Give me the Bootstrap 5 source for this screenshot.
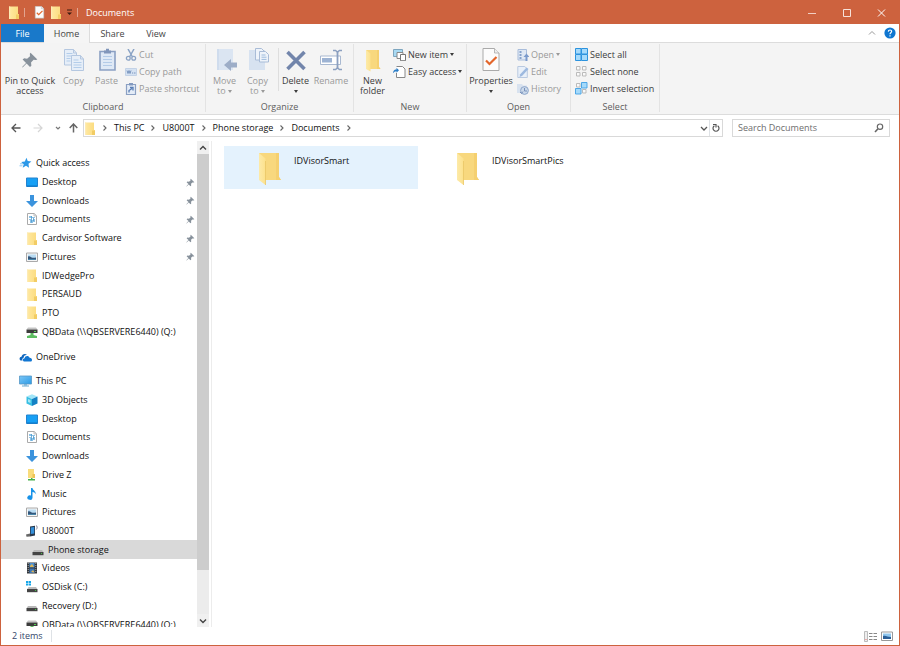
<!DOCTYPE html>
<html lang="en">
<head>
<meta charset="utf-8">
<meta name="viewport" content="width=device-width, initial-scale=1">
<title>Documents</title>
<link href="https://cdn.jsdelivr.net/npm/bootstrap@5.3.0/dist/css/bootstrap.min.css" rel="stylesheet">
<style>
  :root { --accent: #cd623e; --line: #dcdcdc; }
  body { font-family: "Open Sans", "Noto Sans", sans-serif; font-size: 9px; line-height: 12px; color: #111; }
  svg { display: block; flex: none; }
  button { background: none; border: 0; padding: 0; color: inherit; font: inherit; }
  a { color: inherit; text-decoration: none; }
  .window { border: 1px solid var(--accent); }
  .titlebar { background: var(--accent); color: #fff; height: 23px; padding: 0 13px 0 7px; }
  .titlebar h1 { font-size: 9px; line-height: 12px; font-weight: 400; }
  .vsep { width: 1px; height: 9px; background: #e2a48f; }
  .win-buttons { gap: 25px; }
  .tabs { height: 19px; padding-right: 3px; border-bottom: 1px solid var(--line); }
  .tabs .tab { text-align: center; line-height: 19px; height: 18px; color: #444; }
  .tabs .tab-file { width: 43px; background: #1979ca; color: #fff; }
  .tabs .tab-home { width: 46px; background: #f5f5f5; border-right: 1px solid var(--line); height: 19px; }
  .tab-share { width: 45px; }
  .tab-view { width: 42px; }
  .ribbon { background: #f4f4f4; border-bottom: 1px solid var(--line); padding: 1px 0 2px; color: #3c3c3c; }
  .group { border-right: 1px solid #e3e3e3; height: 68px; padding-top: 2px; }
  .group-label { line-height: 10px; color: #5c5c5c; }
  .g-clip { width: 205px; } .g-org { width: 148px; } .g-new { width: 113px; } .g-open { width: 104px; } .g-sel { width: 89px; }
  .tools { padding-left: 2px; }
  .big { width: 33px; line-height: 10px; padding-top: 2px; white-space: nowrap; }
  .big svg { margin: 0 auto 4px; }
  .big-pin { width: 54px; } .big-props { width: 48px; } .big-rename { width: 38px; }
  .small-btn { display: flex; align-items: center; gap: 2px; height: 17px; white-space: nowrap; }
  .ribbon button:disabled { color: #999; }
  .rsep { width: 1px; height: 43px; margin-top: 2px; background: #dedede; }
  .caret { display: inline-block; width: 0; height: 0; border: 2px solid transparent; border-top: 3px solid currentColor; border-bottom: 0; vertical-align: middle; }
  .address { padding: 4px 9px 4px 10px; }
  .nav-buttons { margin-right: 5px; }
  .box { height: 18px; border: 1px solid #d9d9d9; }
  .crumbs { gap: 6px; }
  .refresh { padding: 0 2px; }
  .search { width: 158px; padding: 0 5px; margin-left: 9px; }
  .search input { border: 0; outline: 0; width: 100%; min-width: 0; padding: 0; font: inherit; }
  .search input::placeholder { color: #6d6d6d; opacity: 1; }
  .panes { min-height: 0; }
  .tree { width: 196px; padding-top: 13px; }
  .tree ul { display: grid; grid-auto-rows: 1fr; margin: 0 0 6px; }
  .tree-ten { height: 187px; } .tree-one { height: 19px; } .tree-pc { height: 262px; }
  .tree a { display: flex; align-items: center; height: 100%; gap: 4px; padding: 0 2px 0 25px; white-space: nowrap; }
  .tree .root { padding-left: 18px; }
  .tree .sub { padding-left: 31px; }
  .tree .current { background: #d9d9d9; }
  .scroll { width: 12px; background: #ececec; }
  .scroll button { height: 13px; background: #f0f0f0; }
  .thumb { flex: 417; background: #cdcdcd; }
  .rest { flex: 44; }
  .files { border-left: 1px solid #ececec; margin-left: 2px; padding: 5px 12px; gap: 4px; }
  .file { width: 194px; height: 43px; padding: 6px 0 0 33px; gap: 11px; }
  .file span { padding-top: 3px; }
  .picked { background: #e4f2fd; }
  .status { height: 18px; padding: 0 6px 0 11px; color: #33476b; }
</style>
<script src="https://cdn.jsdelivr.net/npm/bootstrap@5.3.0/dist/js/bootstrap.bundle.min.js"></script>
</head>
<body>
<svg width="0" height="0" class="position-absolute" aria-hidden="true">
  <defs>
    <linearGradient id="gold" x1="0" x2="1"><stop offset="0" stop-color="#ffe9a2"/><stop offset="1" stop-color="#fbdb7e"/></linearGradient>
    <linearGradient id="flap" x1="0" x2="1"><stop offset="0" stop-color="#fdeaa8"/><stop offset="1" stop-color="#fce18c"/></linearGradient>
    <linearGradient id="sky" x1="0" y1="0" x2="1" y2="1"><stop offset="0" stop-color="#7cc6f6"/><stop offset="1" stop-color="#2b9be6"/></linearGradient>
  </defs>
  <symbol id="folder" viewBox="0 0 12 13"><path d="M1 .5h9v7.500h1V13H1z" fill="url(#gold)"/><path d="M8 8.500V13h3V8.500z" fill="#f2cc64"/><path d="M1 .5h1.200V13H1z" fill="#fdebb4"/></symbol>
  <symbol id="bigfolder" viewBox="0 0 24 33"><path d="M1 1h20v24l2 3H7z" fill="#f8d87e"/><path d="M18 1h3v24l2 3h-5z" fill="#f5d070"/><path d="M1 1l6.500 5.500V33L1 28z" fill="url(#flap)"/><path d="M7.500 9v24" stroke="#eac766" stroke-width=".8"/></symbol>
  <symbol id="newfolder" viewBox="0 0 24 24"><path d="M5 2h13v17l1.500 2H8z" fill="#f8d87e"/><path d="M16 2h2v17l1.500 2H16z" fill="#f5d070"/><path d="M5 2l4.500 3.500V23.500L5 21z" fill="url(#flap)"/></symbol>
  <symbol id="desktop" viewBox="0 0 12 12"><path d="M.5 2h11v8.500H.5z" fill="#17a0f5" stroke="#2383cf"/><path d="M1 9.500h10v1H1z" fill="#0f76c4"/></symbol>
  <symbol id="down" viewBox="0 0 12 12"><path d="M4 0h4v6h4l-6 6-6-6h4z" fill="#3b93dd"/></symbol>
  <symbol id="doc" viewBox="0 0 12 12"><path d="M1.500.5h6.800L10.500 3v8.500h-9z" fill="#fff" stroke="#aaa"/><path d="M8 .5V3h2.500" fill="none" stroke="#aaa" stroke-width=".7"/><path d="M3 3h3v2H3zM6 4h3v1H6zM3 6h2v1H3zM4 7h3v3H4zM7 6h2v3H7z" fill="#8cc2e6"/><path d="M5.500 3v6.500M7.500 5v3" stroke="#4d9bd0" stroke-width=".8"/></symbol>
  <symbol id="pic" viewBox="0 0 12 12"><path d="M.5 2h11v8.500H.5z" fill="#f5f5f5" stroke="#aaa"/><path d="M2 3.500h8V9H2z" fill="#b9dcf3"/><path d="M2 5.500c2-1 3 1 4.500 1.200S9 6.500 10 6.500V9H2z" fill="#36577b"/><path d="M2 8h8v1H2z" fill="#4785aa"/></symbol>
  <symbol id="drive" viewBox="0 0 12 12"><path d="M2 6h8l1.500 2.200H.5z" fill="#b8b8b8"/><path d="M.5 8h11v3.200H.5z" fill="#444"/><path d="M9 9h1v1H9z" fill="#47c647"/></symbol>
  <symbol id="netdrive" viewBox="0 0 12 12"><path d="M2 1.500h8l1.500 2h-11z" fill="#c5c5c5"/><path d="M.5 3.500h11V7H.5z" fill="#3c3c3c"/><path d="M8 5h2v1H8z" fill="#5c5"/><path d="M4.500 7h3v2l3.500 1v2H1v-2l3.500-1z" fill="#5cbd60"/></symbol>
  <symbol id="osdrive" viewBox="0 0 12 12"><path d="M0 0h2.200v2H0zM2.700 0H5v2H2.700zM0 2.500h2.200v2H0zM2.700 2.500H5v2H2.700z" fill="#16a6e8"/><path d="M2.500 6h7.500l1.500 2.200H1.200z" fill="#bcbcbc"/><path d="M1 8h10.500v3.200H1z" fill="#444"/><path d="M9 9h1v1H9z" fill="#47c647"/></symbol>
  <symbol id="zdrive" viewBox="0 0 12 12"><path d="M2 0h6v5h1v4H2z" fill="#f9dc7c"/><path d="M6.500 5H9v4H6.500z" fill="#edc457"/><path d="M5 9h1.500v1H9v1.600H2V10h3z" fill="#46b04b"/></symbol>
  <symbol id="star" viewBox="0 0 12 12"><path d="M7 .8l1.200 3.300 3.700.5-2.900 2.200.5 3.900-3-1.900-3.300 2 1-3.600L1.700 5l3.600-.4z" fill="#2b98e8"/><path d="M.5 6.800h3M0 8.800h3" stroke="#6cb8ee" stroke-width=".8"/></symbol>
  <symbol id="cloud" viewBox="0 0 13 12"><path d="M1.500 9.500C-.3 8 .8 5.800 2.500 5.800c.3-2.600 3.700-4 5.500-1.800C5.600 3.700 4.600 5.300 4.700 6.800c-1.600.4-1.700 2-1 2.700z" fill="#0d65bd"/><path d="M4.800 10.500c-1.600-1.100-.8-3.200.8-3.200.4-2.700 4-3.100 5-.5 2.300 0 3.200 2.500 1.700 3.700z" fill="#1176d2"/></symbol>
  <symbol id="pc" viewBox="0 0 13 12"><path d="M.5 1h12v8H.5z" fill="url(#sky)" stroke="#5798c6" stroke-width=".8"/><path d="M5 9.200h3v1H5zM3 10.500h7v1H3z" fill="#6ba9cf"/></symbol>
  <symbol id="cube" viewBox="0 0 12 12"><path d="M.5 2.500L6 .2l5.500 2.300L6 5z" fill="#a1e5f8"/><path d="M.5 2.500L6 5v7L.5 9.500z" fill="#39bfe3"/><path d="M11.500 2.500L6 5v7l5.500-2.500z" fill="#1481c4"/><path d="M2 5l2.500 1v3L2 8z" fill="#a4e6f6"/></symbol>
  <symbol id="music" viewBox="0 0 12 12"><path d="M5 0h1.500c.2 2.300 3.500 2.700 3.200 6.200-.7-1.700-1.700-2.200-3.200-2.300v5.600A2.600 2.300 0 1 1 5 7.500z" fill="#1792e8"/></symbol>
  <symbol id="phone" viewBox="0 0 12 12"><path d="M4 1.500L9 .8v9.700L4 11.500z" fill="#2b3a4d"/><path d="M4.800 2.500l3.400-.5v6.400l-3.400.6z" fill="#3390db"/><path d="M0 9.500l4-1V11.500l-3.500.3z" fill="#666"/><path d="M10 .5c1.500.5 1.500 2.500.3 4" fill="none" stroke="#889"/></symbol>
  <symbol id="video" viewBox="0 0 12 12"><path d="M1 .5h10v11H1z" fill="#33363b"/><path d="M3.500 1h5v4.500h-5z" fill="#4b8fd1"/><path d="M3.500 6.500h5V11h-5z" fill="#3d77b6"/><path d="M4 4l2-2 2 3H4zM5 10l2-2 1.500 2.500z" fill="#dcb354"/><path d="M2.200 1v10.500M9.800 1v10.500" stroke="#aaa" stroke-dasharray="1 1"/></symbol>
  <symbol id="tack" viewBox="0 0 10 10"><path d="M5.300.7l4 4-.9.3-1.300-.1-1.500 1.600.2 1.800-.8.8-2-2L.7 9.400l-.3-.3 2.300-2.400-2-2 .9-.7 1.700.2L5 2.800 4.900 1.300z" fill="#87919b"/></symbol>
  <symbol id="tick" viewBox="0 0 24 24"><path d="M4 .5h11.500L20 5v17.500H4z" fill="#fcfcfc" stroke="#aaa"/><path d="M15.500.5V5H20" fill="#eee" stroke="#aaa" stroke-width=".8"/><path d="M7 12.500l3.500 3.500L17.500 9" fill="none" stroke="#e3662b" stroke-width="2.200"/></symbol>
  <symbol id="copy" viewBox="0 0 24 24"><g fill="#e6eef8" stroke="#b4c7e0"><path d="M2.500 1.500h9L14.500 5v12h-12z"/><path d="M9.500 7.500h9l3 3.500v11.500h-12z"/></g><path d="M4.500 5.500h6M4.500 8h5M4.500 10.500h4M4.500 13h4M11.500 12h5M11.500 14.500h8M11.500 17h8M11.500 19.500h8" stroke="#b3cdea"/><path d="M11.500 1.500V5h3M18.500 7.500V11h3" fill="none" stroke="#b4c7e0"/></symbol>
  <symbol id="paste" viewBox="0 0 24 24"><path d="M5 3.500h15v18.500H5z" fill="#dfe9f6" stroke="#8ba0c3" stroke-width="1.600"/><path d="M9 2.500h7v3H9zM11 .8h3v2h-3z" fill="#8196bb"/><path d="M8 8.500h9M8 11.500h9M8 14.500h9M8 17.500h9" stroke="#b3cbe8"/></symbol>
  <symbol id="cut" viewBox="0 0 12 12"><path d="M3 0l4.500 8M9 0L4.500 8" stroke="#8aa3c5" stroke-width="1.500"/><g fill="none" stroke="#8aa3c5" stroke-width="1.300"><circle cx="3.300" cy="9.300" r="1.900"/><circle cx="8.700" cy="9.300" r="1.900"/></g></symbol>
  <symbol id="cpath" viewBox="0 0 12 12"><path d="M.5 2.500h11v7H.5z" fill="#d5e2f2" stroke="#c3d2e6"/><path d="M2 4.500l1 3 1-3 1 3 1-3M7 7h1.200M9 7h1.500" fill="none" stroke="#6f8cb8" stroke-width=".9"/></symbol>
  <symbol id="pshort" viewBox="0 0 12 12"><path d="M1.500 1.500h9v10h-9z" fill="#e4ecf7" stroke="#8ba0c3" stroke-width="1.200"/><path d="M4 0h4v2.500H4z" fill="#8299bf"/><path d="M4 9.500V7.500l3-2M5 4.500h3v3" fill="none" stroke="#587db5" stroke-width="1.300"/></symbol>
  <symbol id="move" viewBox="0 0 24 24"><path d="M4 1h16v21H4z" fill="#dbe5f2"/><path d="M4 1h2v21H4z" fill="#cfdced"/><path d="M24 14.500h-6V11l-7 6 7 6v-3.500h6z" fill="#9dadc7"/></symbol>
  <symbol id="copyto" viewBox="0 0 24 24"><path d="M3 2h16v20H3z" fill="#d7e2f0"/><path d="M9.500.500h6l3 3V12h-9z" fill="#eef3fa" stroke="#a9bcd7"/><path d="M13.500 3.500h6l3 3V14h-9z" fill="#eef3fa" stroke="#a9bcd7"/><path d="M15.500 7h4M15.500 9.200h5M15.500 11.400h5" stroke="#9dbbdd"/></symbol>
  <symbol id="del" viewBox="0 0 24 24"><path d="M3.500 4l17 17M20.500 4l-17 17" stroke="#7285ab" stroke-width="3.600"/></symbol>
  <symbol id="rename" viewBox="0 0 24 24"><path d="M1.500 8h20v8.500h-20z" fill="#fff" stroke="#a9b9d1"/><path d="M3 10h10v4.500H3z" fill="#9db3d3"/><path d="M18.500 3v18" stroke="#8ca0c0" stroke-width="1.800"/><path d="M14 2.500h2.500l2 1.500 2-1.500H23M14 21.500h2.500l2-1.500 2 1.500H23" fill="none" stroke="#8ca0c0" stroke-width="1.500"/></symbol>
  <symbol id="newitem" viewBox="0 0 13 12"><path d="M.5.500h9v7h-9z" fill="#a9daf3" stroke="#7ea6bf"/><path d="M4 3.500h6v6H4z" fill="#fff" stroke="#888"/><path d="M7.500 5.500h5v6.200h-5z" fill="#fff" stroke="#777"/></symbol>
  <symbol id="easy" viewBox="0 0 13 12"><path d="M3.500.5h6L12 3v8.500H3.500V7" fill="#fff" stroke="#888"/><path d="M0 6.500C.5 4 2 3.500 3.500 3.500V1.800L6 4.300 3.500 6.800V5.300C2 5.300 1 6 .5 7z" fill="#2d7fc8"/></symbol>
  <symbol id="open" viewBox="0 0 12 12"><path d="M1 .5h8.500v10.500H1z" fill="#dfe8f4" stroke="#a9bddb"/><path d="M2.500 2h2v2h-2zM2.500 5h2v2h-2zM2.500 8h2v2h-2z" fill="#86a2cb"/><path d="M8.500 12V8H6.500l3-3.500 3 3.500h-2v4z" fill="#7b9acb"/></symbol>
  <symbol id="edit" viewBox="0 0 12 12"><path d="M.8.500h7l2.500 2.500v8.500H.8z" fill="#e9f0f9" stroke="#b9c9e0"/><path d="M11.500 3L5 10l-2.500 1 .7-2.700L9.500 1.500z" fill="#9db9df"/></symbol>
  <symbol id="history" viewBox="0 0 12 12"><path d="M0 1h5l1 1.500h4V10H0z" fill="#d8e2ef"/><circle cx="7.500" cy="7.500" r="3.900" fill="#cbd9ea" stroke="#8ea6ca"/><path d="M7.500 5v3H10M3 9l1.500 1.500L6 8.500" fill="none" stroke="#7991ba"/></symbol>
  <symbol id="selall" viewBox="0 0 13 13"><g fill="#a5dafb" stroke="#2c93de"><path d="M.5.500h5.500v5.500H.5zM6.500.500h6v5.500h-6zM.5 6.500h5.500v6H.5zM6.500 6.500h6v6h-6z"/></g></symbol>
  <symbol id="selnone" viewBox="0 0 13 13"><g fill="#fafafa" stroke="#bbb"><path d="M1.500 1.500h3.500v3.500H1.500zM7.500 1.500H11v3.500H7.500zM1.500 7.500h3.500V11H1.500zM7.500 7.500H11V11H7.500z"/></g></symbol>
  <symbol id="selinv" viewBox="0 0 13 13"><path d="M1.500 1.500h3.500v3.500H1.500zM7.500 7.500H11V11H7.500z" fill="#fafafa" stroke="#bbb"/><g fill="#a5dafb" stroke="#4ea7e6"><path d="M6.500.500h5.500v5.500H6.500zM.5 6.500H6V12H.5z"/></g></symbol>
  <symbol id="next" viewBox="0 0 6 8"><path d="M1.500 1.500L4 4 1.500 6.500" fill="none" stroke="#666" stroke-width="1.100"/></symbol>
</svg>

<div class="window vh-100 d-flex flex-column overflow-hidden bg-white">
  <header class="titlebar d-flex align-items-center flex-shrink-0">
    <svg width="12" height="13"><use href="#folder"/></svg>
    <span class="vsep ms-1 me-2"></span>
    <svg width="13" height="13"><use href="#tick"/></svg>
    <svg class="ms-1" width="12" height="13"><use href="#folder"/></svg>
    <button class="ms-1" aria-label="Customize toolbar"><svg width="7" height="7" viewBox="0 0 7 7"><path d="M1 1h5" stroke="#3d1b10"/><path d="M1 3.500h5L3.500 6z" fill="#3d1b10"/></svg></button>
    <span class="vsep mx-1"></span>
    <h1 class="m-0 ms-1 flex-grow-1">Documents</h1>
    <div class="win-buttons d-flex align-items-center">
      <button aria-label="Minimize"><svg width="10" height="10" viewBox="0 0 10 10"><path d="M1 5.500h8" stroke="#f1cfc3"/></svg></button>
      <button aria-label="Maximize"><svg width="10" height="10" viewBox="0 0 10 10"><path d="M1.500 1.500h7v7h-7z" fill="none" stroke="#f7e2da"/></svg></button>
      <button aria-label="Close"><svg width="9" height="10" viewBox="0 0 9 10"><path d="M1 1.500l7 7M8 1.500l-7 7" stroke="#fff"/></svg></button>
    </div>
  </header>

  <nav class="tabs d-flex flex-shrink-0">
    <a href="#" class="tab tab-file">File</a>
    <a href="#" class="tab tab-home">Home</a>
    <a href="#" class="tab tab-share">Share</a>
    <a href="#" class="tab tab-view">View</a>
    <div class="ms-auto d-flex align-items-center gap-2">
      <button aria-label="Collapse ribbon"><svg width="8" height="6" viewBox="0 0 8 6"><path d="M1 4.500l3-3 3 3" fill="none" stroke="#999"/></svg></button>
      <button aria-label="Help"><svg width="12" height="12" viewBox="0 0 12 12"><circle cx="6" cy="6" r="5.600" fill="#0f76d0"/><path d="M4.300 4.600C4.400 2.400 7.800 2.500 7.600 4.500 7.500 5.700 6 5.800 6 7.200M6 8.300v1.300" fill="none" stroke="#fff" stroke-width="1.200"/></svg></button>
    </div>
  </nav>

  <div class="ribbon d-flex flex-shrink-0">
    <section class="group g-clip d-flex flex-column">
      <div class="tools d-flex flex-grow-1 align-items-start">
        <button class="big big-pin"><svg width="24" height="24" viewBox="-2 -2 14 14"><use href="#tack" width="10" height="10"/></svg>Pin to Quick<br>access</button>
        <button class="big" disabled><svg width="24" height="24"><use href="#copy"/></svg>Copy</button>
        <button class="big" disabled><svg width="24" height="24"><use href="#paste"/></svg>Paste</button>
        <div class="tools">
          <button class="small-btn" disabled><svg width="12" height="12"><use href="#cut"/></svg>Cut</button>
          <button class="small-btn" disabled><svg width="12" height="12"><use href="#cpath"/></svg>Copy path</button>
          <button class="small-btn" disabled><svg width="12" height="12"><use href="#pshort"/></svg>Paste shortcut</button>
        </div>
      </div>
      <div class="group-label text-center">Clipboard</div>
    </section>
    <section class="group g-org d-flex flex-column">
      <div class="tools d-flex flex-grow-1 align-items-start">
        <button class="big" disabled><svg width="24" height="24"><use href="#move"/></svg>Move<br>to <span class="caret"></span></button>
        <button class="big" disabled><svg width="24" height="24"><use href="#copyto"/></svg>Copy<br>to <span class="caret"></span></button>
        <span class="rsep ms-1"></span>
        <button class="big"><svg width="24" height="24"><use href="#del"/></svg>Delete<br><span class="caret"></span></button>
        <button class="big big-rename" disabled><svg width="24" height="24"><use href="#rename"/></svg>Rename</button>
      </div>
      <div class="group-label text-center">Organize</div>
    </section>
    <section class="group g-new d-flex flex-column">
      <div class="tools d-flex flex-grow-1 align-items-start">
        <button class="big"><svg width="24" height="24"><use href="#newfolder"/></svg>New<br>folder</button>
        <div class="ps-1">
          <button class="small-btn"><svg width="13" height="12"><use href="#newitem"/></svg>New item <span class="caret"></span></button>
          <button class="small-btn"><svg width="13" height="12"><use href="#easy"/></svg>Easy access <span class="caret"></span></button>
        </div>
      </div>
      <div class="group-label text-center">New</div>
    </section>
    <section class="group g-open d-flex flex-column">
      <div class="d-flex flex-grow-1 align-items-start">
        <button class="big big-props"><svg width="24" height="24"><use href="#tick"/></svg>Properties<br><span class="caret"></span></button>
        <div class="tools">
          <button class="small-btn" disabled><svg width="12" height="12"><use href="#open"/></svg>Open <span class="caret"></span></button>
          <button class="small-btn" disabled><svg width="12" height="12"><use href="#edit"/></svg>Edit</button>
          <button class="small-btn" disabled><svg width="12" height="12"><use href="#history"/></svg>History</button>
        </div>
      </div>
      <div class="group-label text-center">Open</div>
    </section>
    <section class="group g-sel d-flex flex-column">
      <div class="flex-grow-1 ps-1">
        <button class="small-btn"><svg width="13" height="13"><use href="#selall"/></svg>Select all</button>
        <button class="small-btn"><svg width="13" height="13"><use href="#selnone"/></svg>Select none</button>
        <button class="small-btn"><svg width="13" height="13"><use href="#selinv"/></svg>Invert selection</button>
      </div>
      <div class="group-label text-center">Select</div>
    </section>
  </div>

  <div class="address d-flex align-items-center flex-shrink-0">
    <div class="nav-buttons d-flex align-items-center gap-2">
      <button aria-label="Back"><svg width="10" height="10" viewBox="0 0 10 10"><path d="M9.500 5H1M5 1L1 5l4 4" fill="none" stroke="#555" stroke-width="1.300"/></svg></button>
      <button class="ms-1" aria-label="Forward"><svg width="10" height="10" viewBox="0 0 10 10"><path d="M.5 5H9M5 1l4 4-4 4" fill="none" stroke="#d5d5d5" stroke-width="1.200"/></svg></button>
      <button class="ms-1" aria-label="Recent locations"><svg width="6" height="5" viewBox="0 0 6 5"><path d="M1 1l2 2 2-2" fill="none" stroke="#777" stroke-width="1.200"/></svg></button>
      <button aria-label="Up"><svg width="9" height="10" viewBox="0 0 9 10"><path d="M4.500 9.500V1M.7 5l3.800-4 3.800 4" fill="none" stroke="#666" stroke-width="1.500"/></svg></button>
    </div>
    <div class="box d-flex align-items-center flex-grow-1">
      <div class="crumbs d-flex align-items-center flex-grow-1">
        <svg width="12" height="13"><use href="#folder"/></svg>
        <svg width="6" height="8"><use href="#next"/></svg>
        <a href="#">This PC</a>
        <svg width="6" height="8"><use href="#next"/></svg>
        <a href="#">U8000T</a>
        <svg width="6" height="8"><use href="#next"/></svg>
        <a href="#">Phone storage</a>
        <svg width="6" height="8"><use href="#next"/></svg>
        <a href="#">Documents</a>
        <svg width="6" height="8"><use href="#next"/></svg>
      </div>
      <button aria-label="Address history"><svg width="10" height="7" viewBox="0 0 10 7"><path d="M2 2l3 3 3-3" fill="none" stroke="#555" stroke-width="1.300"/></svg></button>
      <button class="refresh border-start h-100" aria-label="Refresh"><svg width="8" height="10" viewBox="0 0 8 10"><path d="M5.600 2.700a3 3 0 1 1-3.200 0M1 1.500h3v3" fill="none" stroke="#555" stroke-width="1.200"/></svg></button>
    </div>
    <label class="box search d-flex align-items-center">
      <input type="text" placeholder="Search Documents" aria-label="Search Documents">
      <svg width="10" height="10" viewBox="0 0 10 10"><circle cx="6" cy="3.700" r="2.700" fill="none" stroke="#666" stroke-width="1.200"/><path d="M4 5.700L1 9" stroke="#666" stroke-width="1.600"/></svg>
    </label>
  </div>

  <div class="panes d-flex flex-grow-1 overflow-hidden">
    <nav class="tree flex-shrink-0 overflow-hidden">
      <ul class="list-unstyled tree-ten">
        <li><a class="root" href="#"><svg width="13" height="12"><use href="#star"/></svg>Quick access</a></li>
        <li><a href="#"><svg width="12" height="12"><use href="#desktop"/></svg>Desktop<svg class="ms-auto" width="9" height="9"><use href="#tack"/></svg></a></li>
        <li><a href="#"><svg width="12" height="12"><use href="#down"/></svg>Downloads<svg class="ms-auto" width="9" height="9"><use href="#tack"/></svg></a></li>
        <li><a href="#"><svg width="12" height="12"><use href="#doc"/></svg>Documents<svg class="ms-auto" width="9" height="9"><use href="#tack"/></svg></a></li>
        <li><a href="#"><svg width="12" height="13"><use href="#folder"/></svg>Cardvisor Software<svg class="ms-auto" width="9" height="9"><use href="#tack"/></svg></a></li>
        <li><a href="#"><svg width="12" height="12"><use href="#pic"/></svg>Pictures<svg class="ms-auto" width="9" height="9"><use href="#tack"/></svg></a></li>
        <li><a href="#"><svg width="12" height="13"><use href="#folder"/></svg>IDWedgePro</a></li>
        <li><a href="#"><svg width="12" height="13"><use href="#folder"/></svg>PERSAUD</a></li>
        <li><a href="#"><svg width="12" height="13"><use href="#folder"/></svg>PTO</a></li>
        <li><a href="#"><svg width="12" height="12"><use href="#netdrive"/></svg>QBData (\\QBSERVERE6440) (Q:)</a></li>
      </ul>
      <ul class="list-unstyled tree-one">
        <li><a class="root" href="#"><svg width="13" height="12"><use href="#cloud"/></svg>OneDrive</a></li>
      </ul>
      <ul class="list-unstyled tree-pc">
        <li><a class="root" href="#"><svg width="13" height="12"><use href="#pc"/></svg>This PC</a></li>
        <li><a href="#"><svg width="12" height="12"><use href="#cube"/></svg>3D Objects</a></li>
        <li><a href="#"><svg width="12" height="12"><use href="#desktop"/></svg>Desktop</a></li>
        <li><a href="#"><svg width="12" height="12"><use href="#doc"/></svg>Documents</a></li>
        <li><a href="#"><svg width="12" height="12"><use href="#down"/></svg>Downloads</a></li>
        <li><a href="#"><svg width="12" height="12"><use href="#zdrive"/></svg>Drive Z</a></li>
        <li><a href="#"><svg width="12" height="12"><use href="#music"/></svg>Music</a></li>
        <li><a href="#"><svg width="12" height="12"><use href="#pic"/></svg>Pictures</a></li>
        <li><a href="#"><svg width="12" height="12"><use href="#phone"/></svg>U8000T</a></li>
        <li><a class="sub current" href="#"><svg width="12" height="12"><use href="#drive"/></svg>Phone storage</a></li>
        <li><a href="#"><svg width="12" height="12"><use href="#video"/></svg>Videos</a></li>
        <li><a href="#"><svg width="12" height="12"><use href="#osdrive"/></svg>OSDisk (C:)</a></li>
        <li><a href="#"><svg width="12" height="12"><use href="#drive"/></svg>Recovery (D:)</a></li>
        <li><a href="#"><svg width="12" height="12"><use href="#netdrive"/></svg>QBData (\\QBSERVERE6440) (Q:)</a></li>
      </ul>
    </nav>
    <div class="scroll d-flex flex-column flex-shrink-0">
      <button class="d-flex align-items-center justify-content-center" aria-label="Scroll up"><svg width="8" height="6" viewBox="0 0 8 6"><path d="M1 4.500l3-3 3 3" fill="none" stroke="#444" stroke-width="1.400"/></svg></button>
      <div class="thumb"></div>
      <div class="rest"></div>
      <button class="d-flex align-items-center justify-content-center" aria-label="Scroll down"><svg width="8" height="6" viewBox="0 0 8 6"><path d="M1 1.500l3 3 3-3" fill="none" stroke="#444" stroke-width="1.400"/></svg></button>
    </div>
    <main class="files d-flex flex-grow-1 align-items-start">
      <a href="#" class="file picked d-flex align-items-start"><svg width="26" height="33"><use href="#bigfolder"/></svg><span>IDVisorSmart</span></a>
      <a href="#" class="file d-flex align-items-start"><svg width="26" height="33"><use href="#bigfolder"/></svg><span>IDVisorSmartPics</span></a>
    </main>
  </div>

  <footer class="status d-flex align-items-center flex-shrink-0">
    <span class="border-end pe-2">2 items</span>
    <button class="ms-auto me-1" aria-label="Details view"><svg width="13" height="11" viewBox="0 0 13 11"><path d="M.5.500h3v10h-3z" fill="#eee" stroke="#bbb"/><path d="M1.500 8h1v1h-1z" fill="#e66"/><path d="M5 2.500h3.500M9.500 2.500H13M5 5.500h3.500M9.500 5.500H13M5 8.500h3.500M9.500 8.500H13" stroke="#888"/></svg></button>
    <button aria-label="Large icons view"><svg width="12" height="11" viewBox="0 0 12 11"><path d="M.5 1h11v8.500H.5z" fill="#fff" stroke="#999"/><path d="M2 2.500h8V8H2z" fill="#8fc6ee"/><path d="M2 5c3-1 4 1 8 1v2H2z" fill="#2b5f97"/></svg></button>
  </footer>
</div>
</body>
</html>
